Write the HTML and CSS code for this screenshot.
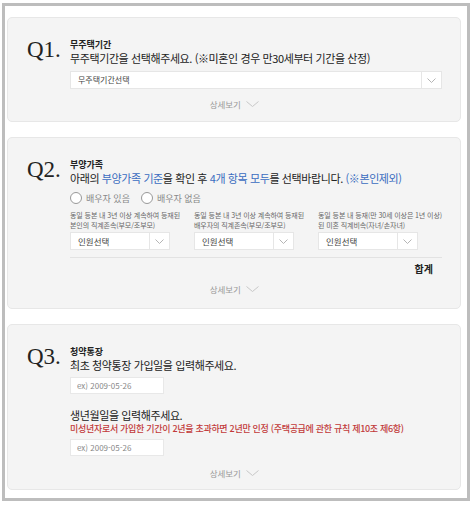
FILE: index.html
```html
<!DOCTYPE html>
<html lang="ko">
  <head>
    <meta charset="UTF-8" />
    <meta name="viewport" content="width=device-width, initial-scale=1.0" />
    <title>청약 가점 계산</title>
    <link rel="stylesheet" href="styles.css">
  </head>
  <body>
    <div class="frame">
      <section class="card card-q1">
        <div class="q">
          <div class="q-num">Q1.</div>
          <div class="q-body">
            <p class="q-label">무주택기간</p>
            <p class="q-title">무주택기간을 선택해주세요. (※미혼인 경우 만30세부터 기간을 산정)</p>
            <div class="select">
              <span class="select-text">무주택기간선택</span>
              <span class="select-arrow">
                <svg width="9" height="5" viewBox="0 0 9 5"><path d="M0.5 0.5 L4.5 4.5 L8.5 0.5" fill="none" stroke="#b5b5b5" /></svg>
              </span>
            </div>
          </div>
        </div>
        <div class="more">상세보기 <svg width="13" height="6" viewBox="0 0 13 6"><path d="M0.5 0.5 L6.5 5.5 L12.5 0.5" fill="none" stroke="#c8c8c8" /></svg></div>
      </section>

      <section class="card card-q2">
        <div class="q">
          <div class="q-num">Q2.</div>
          <div class="q-body">
            <p class="q-label">부양가족</p>
            <p class="q-title">아래의 <span class="blue">부양가족 기준</span>을 확인 후 <span class="blue">4개 항목 모두</span>를 선택바랍니다. <span class="blue">(※본인제외)</span></p>
            <div class="radios">
              <label class="radio"><span class="radio-dot"></span>배우자 있음</label>
              <label class="radio"><span class="radio-dot"></span>배우자 없음</label>
            </div>
            <div class="family">
              <div class="family-col">
                <p class="family-caption">동일 등본 내 3년 이상 계속하여 등재된<br>본인의 직계존속(부모/조부모)</p>
                <div class="select select-small">
                  <span class="select-text">인원선택</span>
                  <span class="select-arrow">
                    <svg width="9" height="5" viewBox="0 0 9 5"><path d="M0.5 0.5 L4.5 4.5 L8.5 0.5" fill="none" stroke="#b5b5b5" /></svg>
                  </span>
                </div>
              </div>
              <div class="family-col">
                <p class="family-caption">동일 등본 내 3년 이상 계속하여 등재된<br>배우자의 직계존속(부모/조부모)</p>
                <div class="select select-small">
                  <span class="select-text">인원선택</span>
                  <span class="select-arrow">
                    <svg width="9" height="5" viewBox="0 0 9 5"><path d="M0.5 0.5 L4.5 4.5 L8.5 0.5" fill="none" stroke="#b5b5b5" /></svg>
                  </span>
                </div>
              </div>
              <div class="family-col">
                <p class="family-caption">동일 등본 내 등재(만 30세 이상은 1년 이상)<br>된 미혼 직계비속(자녀/손자녀)</p>
                <div class="select select-small">
                  <span class="select-text">인원선택</span>
                  <span class="select-arrow">
                    <svg width="9" height="5" viewBox="0 0 9 5"><path d="M0.5 0.5 L4.5 4.5 L8.5 0.5" fill="none" stroke="#b5b5b5" /></svg>
                  </span>
                </div>
              </div>
            </div>
            <div class="total">합계</div>
          </div>
        </div>
        <div class="more">상세보기 <svg width="13" height="6" viewBox="0 0 13 6"><path d="M0.5 0.5 L6.5 5.5 L12.5 0.5" fill="none" stroke="#c8c8c8" /></svg></div>
      </section>

      <section class="card card-q3">
        <div class="q">
          <div class="q-num">Q3.</div>
          <div class="q-body">
            <p class="q-label">청약통장</p>
            <p class="q-title">최초 청약통장 가입일을 입력해주세요.</p>
            <input class="date-input" type="text" placeholder="ex) 2009-05-26" />
            <p class="q-title q-title-sub">생년월일을 입력해주세요.</p>
            <p class="warn">미성년자로서 가입한 기간이 2년을 초과하면 2년만 인정 (주택공급에 관한 규칙 제10조 제6항)</p>
            <input class="date-input" type="text" placeholder="ex) 2009-05-26" />
          </div>
        </div>
        <div class="more">상세보기 <svg width="13" height="6" viewBox="0 0 13 6"><path d="M0.5 0.5 L6.5 5.5 L12.5 0.5" fill="none" stroke="#c8c8c8" /></svg></div>
      </section>
    </div>
  </body>
</html>
```

FILE: styles.css
```css
body {
  margin: 0;
  background: #fff;
  font-family: "Noto Sans CJK KR", "Noto Sans", sans-serif;
  color: #333;
}
p {
  margin: 0;
}
.frame {
  margin: 3px 4px 5px 2px;
  border: 3px solid #bdbdbd;
  padding: 11px 6px 8px 2px;
  display: flex;
  flex-direction: column;
  gap: 15px;
}
.card {
  background: #f4f4f4;
  border: 1px solid #e7e7e7;
  border-radius: 5px;
  padding: 21px 18px 11px 19px;
}
.card-q2 {
  padding-bottom: 13px;
}
.card-q3 {
  padding-bottom: 10px;
}
.q {
  display: flex;
}
.q-num {
  width: 43px;
  flex: none;
  font-family: "Liberation Serif", serif;
  font-size: 23px;
  line-height: 23px;
  margin-top: -1px;
  color: #222;
}
.q-body {
  flex: 1;
}
.q-label {
  font-size: 9px;
  line-height: 12px;
  font-weight: bold;
  color: #222;
}
.q-title {
  font-size: 11px;
  line-height: 15px;
  letter-spacing: -0.4px;
  color: #222;
}
.blue {
  color: #3a6cc0;
}

/* select boxes */
.select {
  display: flex;
  height: 18px;
  box-sizing: border-box;
  margin-top: 5px;
  background: #fff;
  border: 1px solid #e6e6e6;
}
.select-text {
  flex: 1;
  padding-left: 7px;
  font-size: 8px;
  line-height: 16px;
  color: #444;
}
.select-arrow {
  width: 19px;
  border-left: 1px solid #e6e6e6;
  display: flex;
  align-items: center;
  justify-content: center;
}
.select-small {
  width: 100px;
  margin-top: 2px;
}
.select-small .select-text {
  font-size: 8.5px;
}

/* Q2 */
.radios {
  display: flex;
  gap: 11px;
  margin-top: 5px;
  height: 14px;
  align-items: center;
}
.radio {
  display: flex;
  align-items: center;
  gap: 4px;
  font-size: 9px;
  color: #888;
}
.radio-dot {
  width: 12px;
  height: 12px;
  box-sizing: border-box;
  border: 1px solid #999;
  border-radius: 50%;
  background: #fff;
}
.family {
  display: grid;
  grid-template-columns: repeat(3, 124px);
  margin-top: 5px;
  padding-bottom: 7px;
  border-bottom: 1px solid #e2e2e2;
}
.family-caption {
  font-size: 7px;
  line-height: 10px;
  letter-spacing: -0.1px;
  color: #666;
  white-space: nowrap;
}
.total {
  text-align: right;
  padding-right: 9px;
  margin-top: 4px;
  font-size: 10px;
  line-height: 14px;
  font-weight: bold;
  color: #222;
}

/* Q3 */
.date-input {
  display: block;
  width: 94px;
  height: 17px;
  box-sizing: border-box;
  margin-top: 4px;
  padding: 0 6px;
  border: 1px solid #e8e8e8;
  background: #fff;
  font-family: "Noto Sans CJK KR", "Noto Sans", sans-serif;
  font-size: 8px;
}
.date-input::placeholder {
  color: #888;
}
.q-title-sub {
  margin-top: 14px;
}
.warn {
  font-size: 9px;
  line-height: 12px;
  letter-spacing: -0.3px;
  font-weight: 500;
  color: #c23a3a;
}

.more {
  margin-top: 9px;
  text-align: center;
  font-size: 8.5px;
  line-height: 12px;
  color: #999;
}
.card-q2 .more {
  margin-top: 7px;
}
.card-q3 .more {
  margin-top: 11px;
}
.more svg {
  margin-left: 3px;
  vertical-align: 1px;
}
```
